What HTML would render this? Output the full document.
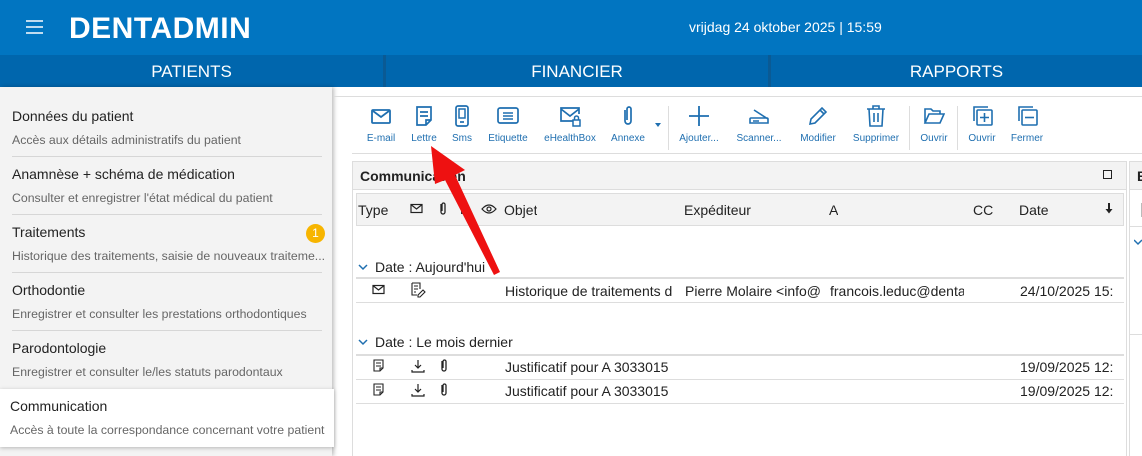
<!DOCTYPE html><html><head><meta charset="utf-8"><style>
*{margin:0;padding:0;box-sizing:border-box}
body{width:1142px;height:456px;overflow:hidden;font-family:"Liberation Sans",sans-serif;background:#fff;position:relative}
.a{position:absolute}
.hdr{left:0;top:0;width:1142px;height:55px;background:#0175c1}
.nav{left:0;top:55px;width:1142px;height:32px;background:#0066ad}
.nav div{position:absolute;top:0;height:32px;line-height:34px;color:#fff;font-size:17px;text-align:center}
.side{left:0;top:87px;width:332px;height:369px;background:#f3f3f3;box-shadow:2px 0 4px rgba(0,0,0,.25)}
.it{position:absolute;left:12px;width:312px}
.it .t{font-size:14px;color:#222}
.it .d{font-size:12.3px;color:#666;margin-top:9px;white-space:nowrap}
.sep{position:absolute;left:12px;width:310px;height:1px;background:#d6d6d6}
.tb{position:absolute;top:105px;text-align:center;color:#1f6fb0;font-size:10px}
.tb svg{display:block;margin:0 auto 6px}
.hl{position:absolute;height:1px;background:#ddd}
.cell{position:absolute;font-size:14px;color:#222;white-space:nowrap;overflow:hidden}
</style></head><body>
<div class="a hdr"></div>
<svg class="a" style="left:25px;top:19px" width="20" height="16"><path d="M1 2h17M1 8h17M1 14h17" stroke="#fff" stroke-width="1.6"/></svg>
<div class="a" style="left:69px;top:12px;color:#fff;font-size:30px;font-weight:bold;letter-spacing:0.5px">DENTADMIN</div>
<div class="a" style="left:689px;top:19px;color:#fff;font-size:14px">vrijdag 24 oktober 2025 | 15:59</div>
<div class="a nav"><div style="left:0;width:383px">PATIENTS</div><div style="left:385px;width:383px;border-left:1px solid #0a5a94">FINANCIER</div><div style="left:770px;width:372px;border-left:1px solid #0a5a94">RAPPORTS</div></div>
<div class="a" style="left:383px;top:55px;width:2px;height:32px;background:#0a5a94"></div>
<div class="a" style="left:768px;top:55px;width:2px;height:32px;background:#0a5a94"></div>
<div class="a side"></div>
<div class="it" style="top:108px"><div class="t">Données du patient</div><div class="d">Accès aux détails administratifs du patient</div></div>
<div class="sep" style="top:156px"></div>
<div class="it" style="top:166px"><div class="t">Anamnèse + schéma de médication</div><div class="d">Consulter et enregistrer l'état médical du patient</div></div>
<div class="sep" style="top:214px"></div>
<div class="it" style="top:224px"><div class="t">Traitements</div><div class="d">Historique des traitements, saisie de nouveaux traiteme...</div></div>
<div class="a" style="left:306px;top:224px;width:19px;height:19px;border-radius:50%;background:#f7b500;color:#fff;font-size:12px;text-align:center;line-height:19px">1</div>
<div class="sep" style="top:272px"></div>
<div class="it" style="top:282px"><div class="t">Orthodontie</div><div class="d">Enregistrer et consulter les prestations orthodontiques</div></div>
<div class="sep" style="top:330px"></div>
<div class="it" style="top:340px"><div class="t">Parodontologie</div><div class="d">Enregistrer et consulter le/les statuts parodontaux</div></div>
<div class="a" style="left:0;top:389px;width:334px;height:58px;background:#fff;box-shadow:0 1px 4px rgba(0,0,0,.25)"></div>
<div class="it" style="top:398px;left:10px"><div class="t">Communication</div><div class="d">Accès à toute la correspondance concernant votre patient</div></div>
<!-- main -->
<div class="a" style="left:334px;top:96px;width:808px;height:1px;background:#ddd"></div>
<div class="a" style="left:352px;top:153px;width:790px;height:1px;background:#ddd"></div>
<div class="tb" style="left:362px;width:38px"><svg width="22" height="22"><rect x="2" y="5" width="18" height="13" rx="1" fill="none" stroke="#1f6fb0" stroke-width="1.8"/><path d="M3 6l8 6 8-6" fill="none" stroke="#1f6fb0" stroke-width="1.8"/></svg>E-mail</div>
<div class="tb" style="left:408px;width:32px"><svg width="22" height="22"><path d="M4 2h14v13l-5 5H4z M13 20v-5h5 M7 7h8M7 11h8" fill="none" stroke="#1f6fb0" stroke-width="1.7"/></svg>Lettre</div>
<div class="tb" style="left:448px;width:28px"><svg width="22" height="22"><rect x="5" y="1" width="12" height="20" rx="2" fill="none" stroke="#1f6fb0" stroke-width="1.7"/><rect x="8" y="4" width="6" height="9" fill="none" stroke="#1f6fb0" stroke-width="1.5"/><path d="M9 17h4" stroke="#1f6fb0" stroke-width="1.7"/></svg>Sms</div>
<div class="tb" style="left:485px;width:46px"><svg width="22" height="22"><rect x="1" y="3" width="20" height="15" rx="2" fill="none" stroke="#1f6fb0" stroke-width="1.7"/><path d="M6 8h10M6 11h10M6 14h10" stroke="#1f6fb0" stroke-width="1.5"/></svg>Etiquette</div>
<div class="tb" style="left:541px;width:58px"><svg width="22" height="22"><path d="M14 16H2V3h18v6 M2 4l9 7 9-7" fill="none" stroke="#1f6fb0" stroke-width="1.7"/><rect x="14" y="15" width="7" height="6" fill="none" stroke="#1f6fb0" stroke-width="1.5"/><path d="M15.5 15v-2a2 2 0 0 1 4 0v2" fill="none" stroke="#1f6fb0" stroke-width="1.5"/></svg>eHealthBox</div>
<div class="tb" style="left:609px;width:38px"><svg width="22" height="22"><path d="M8 5v11a3 3 0 0 0 6 0V4a2 2 0 0 0-4 0v11" fill="none" stroke="#1f6fb0" stroke-width="1.7"/></svg>Annexe</div>
<div class="a" style="left:655px;top:123px;width:0;height:0;border:3px solid transparent;border-top:4px solid #1f6fb0"></div>
<div class="a" style="left:668px;top:106px;width:1px;height:44px;background:#ddd"></div>
<div class="tb" style="left:677px;width:44px"><svg width="22" height="22"><path d="M11 1v20M1 11h20" stroke="#1f6fb0" stroke-width="1.8"/></svg>Ajouter...</div>
<div class="tb" style="left:734px;width:50px"><svg width="22" height="22"><path d="M6 5l14 9 M3 13h16a1 1 0 0 1 1 1v4H2v-4a1 1 0 0 1 1-1z M5 16h6" fill="none" stroke="#1f6fb0" stroke-width="1.6"/></svg>Scanner...</div>
<div class="tb" style="left:796px;width:44px"><svg width="22" height="22"><path d="M3 19l1-5L15 3l4 4L8 18z M13 5l4 4" fill="none" stroke="#1f6fb0" stroke-width="1.6"/></svg>Modifier</div>
<div class="tb" style="left:851px;width:50px"><svg width="22" height="22"><path d="M2 4h18M8 4V1h6v3 M4 4l1 17h12l1-17 M9 8v9M13 8v9" fill="none" stroke="#1f6fb0" stroke-width="1.6"/></svg>Supprimer</div>
<div class="a" style="left:909px;top:106px;width:1px;height:44px;background:#ddd"></div>
<div class="tb" style="left:918px;width:32px"><svg width="22" height="22"><path d="M2 18V4h6l2 2h7v3 M2 18l4-9h15l-4 9z" fill="none" stroke="#1f6fb0" stroke-width="1.6"/></svg>Ouvrir</div>
<div class="a" style="left:957px;top:106px;width:1px;height:44px;background:#ddd"></div>
<div class="tb" style="left:966px;width:32px"><svg width="22" height="22"><path d="M3 16V2h14" fill="none" stroke="#1f6fb0" stroke-width="1.6"/><rect x="6" y="5" width="15" height="15" rx="1" fill="none" stroke="#1f6fb0" stroke-width="1.6"/><path d="M13.5 8v9M9 12.5h9" stroke="#1f6fb0" stroke-width="1.6"/></svg>Ouvrir</div>
<div class="tb" style="left:1009px;width:36px"><svg width="22" height="22"><path d="M3 16V2h14" fill="none" stroke="#1f6fb0" stroke-width="1.6"/><rect x="6" y="5" width="15" height="15" rx="1" fill="none" stroke="#1f6fb0" stroke-width="1.6"/><path d="M9 12.5h9" stroke="#1f6fb0" stroke-width="1.6"/></svg>Fermer</div>
<!-- panel -->
<div class="a" style="left:352px;top:161px;width:775px;height:295px;border:1px solid #ddd;border-bottom:none"></div>
<div class="a" style="left:353px;top:162px;width:773px;height:28px;background:#f3f3f3;border-bottom:1px solid #ddd"></div>
<div class="a" style="left:360px;top:168px;font-size:14px;font-weight:bold;color:#222">Communication</div>
<div class="a" style="left:1103px;top:170px;width:9px;height:9px;border:1.5px solid #222"></div>
<div class="a" style="left:356px;top:193px;width:768px;height:33px;background:#f3f3f3;border:1px solid #ddd"></div>
<div class="cell" style="left:358px;top:202px">Type</div>
<svg class="a" style="left:410px;top:203px" width="14" height="12"><rect x="1" y="1.5" width="11" height="8" fill="none" stroke="#222" stroke-width="1.2"/><path d="M1.5 2l5 4 5-4" fill="none" stroke="#222" stroke-width="1.2"/></svg>
<svg class="a" style="left:438px;top:202px" width="10" height="14"><path d="M3 2v8a2 2 0 0 0 4 0V2.5a1.5 1.5 0 0 0-3 0V9" fill="none" stroke="#222" stroke-width="1.3"/></svg>
<div class="a" style="left:461px;top:205px;width:8px;height:9px;background:#333"></div>
<svg class="a" style="left:481px;top:203px" width="16" height="12"><path d="M1 6q7-8 14 0q-7 8-14 0z" fill="none" stroke="#222" stroke-width="1.2"/><circle cx="8" cy="6" r="2" fill="none" stroke="#222" stroke-width="1.2"/></svg>
<div class="cell" style="left:504px;top:202px">Objet</div>
<div class="cell" style="left:684px;top:202px">Expéditeur</div>
<div class="cell" style="left:829px;top:202px">A</div>
<div class="cell" style="left:973px;top:202px">CC</div>
<div class="cell" style="left:1019px;top:202px">Date</div>
<svg class="a" style="left:1105px;top:203px" width="8" height="11"><path d="M4 0v7" stroke="#222" stroke-width="2"/><path d="M0.5 6h7L4 10.5z" fill="#222"/></svg>
<div class="a" style="left:1129px;top:161px;width:13px;height:295px;border-left:1px solid #ddd;border-top:1px solid #ddd"></div>
<div class="a" style="left:1130px;top:162px;width:12px;height:28px;background:#f3f3f3;border-bottom:1px solid #ddd"></div>
<div class="a" style="left:1137px;top:168px;font-size:14px;font-weight:bold;color:#222">E</div>
<div class="a" style="left:1141px;top:203px;width:1px;height:14px;background:#bbb"></div>
<div class="a" style="left:1130px;top:226px;width:12px;height:1px;background:#ddd"></div>
<div class="a" style="left:1130px;top:334px;width:12px;height:1px;background:#ddd"></div>
<svg class="a" style="left:1134px;top:238px" width="8" height="8"><path d="M0 2l4 4 4-4" fill="none" stroke="#1f6fb0" stroke-width="1.5"/></svg>
<!-- rows -->
<svg class="a" style="left:357px;top:262px" width="12" height="10"><path d="M2 3l4 4 4-4" fill="none" stroke="#1f6fb0" stroke-width="1.5"/></svg>
<div class="cell" style="left:375px;top:259px">Date : Aujourd'hui</div>
<div class="hl" style="left:356px;top:277px;width:768px;height:2px"></div>
<svg class="a" style="left:372px;top:284px" width="14" height="12"><rect x="1" y="1.5" width="11" height="8" fill="none" stroke="#222" stroke-width="1.2"/><path d="M1.5 2l5 4 5-4" fill="none" stroke="#222" stroke-width="1.2"/></svg>
<svg class="a" style="left:410px;top:282px" width="16" height="16"><path d="M2 1h8v6 M2 1v12h5 M4 4h4M4 7h4M4 10h2 M8 13l5-5 2 2-5 5H8z" fill="none" stroke="#222" stroke-width="1.1"/></svg>
<div class="cell" style="left:505px;top:283px;width:172px">Historique de traitements d</div>
<div class="cell" style="left:685px;top:283px;width:135px">Pierre Molaire &lt;info@</div>
<div class="cell" style="left:830px;top:283px;width:134px">francois.leduc@denta</div>
<div class="cell" style="left:1020px;top:283px;width:100px">24/10/2025 15:</div>
<div class="hl" style="left:356px;top:302px;width:768px"></div>
<svg class="a" style="left:357px;top:337px" width="12" height="10"><path d="M2 3l4 4 4-4" fill="none" stroke="#1f6fb0" stroke-width="1.5"/></svg>
<div class="cell" style="left:375px;top:334px">Date : Le mois dernier</div>
<div class="hl" style="left:356px;top:354px;width:768px;height:2px"></div>
<div class="hl" style="left:356px;top:379px;width:768px"></div>
<div class="hl" style="left:356px;top:403px;width:768px"></div>
<svg class="a" style="left:373px;top:359px" width="12" height="14"><path d="M1 1h9v8l-3 3H1z M7 12V9h3 M3 4h5M3 7h5" fill="none" stroke="#222" stroke-width="1.1"/></svg>
<svg class="a" style="left:411px;top:359px" width="14" height="14"><path d="M7 1v8M4 6l3 3 3-3 M1 11v2h12v-2" fill="none" stroke="#222" stroke-width="1.2"/></svg>
<svg class="a" style="left:439px;top:359px" width="10" height="14"><path d="M3 2v8a2 2 0 0 0 4 0V2.5a1.5 1.5 0 0 0-3 0V9" fill="none" stroke="#222" stroke-width="1.3"/></svg>
<div class="cell" style="left:505px;top:359px;width:170px">Justificatif pour A 3033015</div>
<div class="cell" style="left:1020px;top:359px;width:100px">19/09/2025 12:</div>
<svg class="a" style="left:373px;top:383px" width="12" height="14"><path d="M1 1h9v8l-3 3H1z M7 12V9h3 M3 4h5M3 7h5" fill="none" stroke="#222" stroke-width="1.1"/></svg>
<svg class="a" style="left:411px;top:383px" width="14" height="14"><path d="M7 1v8M4 6l3 3 3-3 M1 11v2h12v-2" fill="none" stroke="#222" stroke-width="1.2"/></svg>
<svg class="a" style="left:439px;top:383px" width="10" height="14"><path d="M3 2v8a2 2 0 0 0 4 0V2.5a1.5 1.5 0 0 0-3 0V9" fill="none" stroke="#222" stroke-width="1.3"/></svg>
<div class="cell" style="left:505px;top:383px;width:170px">Justificatif pour A 3033015</div>
<div class="cell" style="left:1020px;top:383px;width:100px">19/09/2025 12:</div>
<!-- arrow -->
<svg class="a" style="left:0;top:0" width="1142" height="456"><path d="M431 146 L465 170 L455 175 L500 272 L494 275 L445 180 L435 184 Z" fill="#ee1111"/></svg>
</body></html>
